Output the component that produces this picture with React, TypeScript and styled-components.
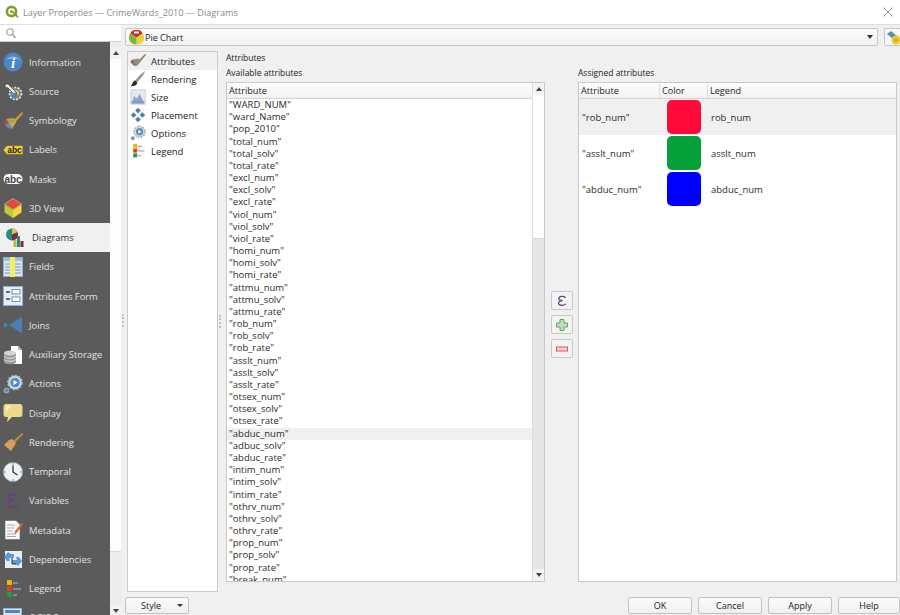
import React from "react";
import styled, { createGlobalStyle } from "styled-components";

const Global = createGlobalStyle`
  html, body { margin: 0; padding: 0; background: #f0f0f0; }
  * { box-sizing: border-box; }
  body { font-family: "Open Sans", "Noto Sans", sans-serif; font-size: 9.5px; color: #2b2b2b; }
`;

const Window = styled.div`
  width: 900px; height: 615px; overflow: hidden; display: flex; flex-direction: column; background: #f0f0f0;
`;
const TitleBar = styled.header`
  height: 25px; flex: none; background: #fff; display: flex; align-items: center; padding: 0 7px 0 5px; gap: 4px;
  border-bottom: 1px solid #dedede;
`;
const TitleText = styled.span`
  flex: 1; color: #8a8a8a; font-size: 9.1px;
`;
const Workspace = styled.div`
  flex: 1; min-height: 0; display: flex;
`;
const LeftColumn = styled.aside`
  width: 121px; flex: none; display: flex; flex-direction: column;
`;
const SearchBox = styled.div`
  height: 17px; flex: none; background: #fff; border-bottom: 1px solid #cfcfcf; display: flex; align-items: center; padding-left: 6px;
`;
const NavArea = styled.div`
  flex: 1; min-height: 0; display: flex;
`;
const NavList = styled.nav`
  width: 110px; flex: none; background: #5b5b5b; padding-top: 5.6px; overflow: hidden;
`;
const NavItem = styled.div<{ $active?: boolean }>`
  height: 29.25px; display: flex; align-items: center; gap: ${p => (p.$active ? "7px" : "6px")};
  padding-left: ${p => (p.$active ? "5px" : "3px")};
  background: ${p => (p.$active ? "#f0f0f0" : "transparent")};
  color: ${p => (p.$active ? "#2b2b2b" : "#e2e2e2")};
  white-space: nowrap; font-size: 9.4px;
  svg { flex: none; }
`;
const VScroll = styled.div<{ $w: number }>`
  width: ${p => p.$w}px; flex: none; display: flex; flex-direction: column; background: #e6e6e6; align-items: stretch;
  border-left: 1px solid #dcdcdc;
`;
const NavScroll = styled(VScroll)`
  margin-bottom: -2px; padding-top: 5px; background: #ececec; border-left: 0;
`;
const ScrollArrow = styled.div<{ $down?: boolean }>`
  height: 12px; flex: none; background: #f2f2f2; display: flex; align-items: center; justify-content: center;
  &::after {
    content: ""; border-left: 3.5px solid transparent; border-right: 3.5px solid transparent;
    ${p => (p.$down ? "border-top: 4px solid #444;" : "border-bottom: 4px solid #444;")}
  }
`;
const ScrollThumb = styled.div<{ $h: number }>`
  height: ${p => p.$h}px; flex: none; background: #fdfdfd; border-bottom: 1px solid #d8d8d8;
`;
const ScrollTrack = styled.div`
  flex: 1;
`;
const Grip = styled.div<{ $w: number; $pad: number }>`
  width: ${p => p.$w}px; flex: none; display: flex; align-items: center; padding-left: ${p => p.$pad}px;
  &::after { content: ""; width: 2px; height: 13px; border-left: 2px dotted #c0c0c0; }
`;
const Main = styled.main`
  flex: 1; min-width: 0; display: flex; flex-direction: column;
`;
const TopRow = styled.div`
  height: 18px; margin-top: 3px; flex: none; display: flex; gap: 6px; margin-right: -4px;
`;
const Combo = styled.div`
  flex: 1; border: 1px solid #c6c6c6; border-radius: 2px; background: linear-gradient(#fdfdfd, #f2f2f2);
  display: flex; align-items: center; gap: 1px; padding: 0 4px 0 3px;
`;
const ComboText = styled.span`
  flex: 1; color: #222; font-size: 9px;
`;
const Caret = styled.span`
  width: 0; height: 0; border-left: 3.5px solid transparent; border-right: 3.5px solid transparent; border-top: 4px solid #333;
`;
const IconButton = styled.div`
  width: 20px; flex: none; border: 1px solid #c6c6c6; border-radius: 2px; background: #f6f6f6;
  display: flex; align-items: center; padding-left: 1px;
`;
const Content = styled.div`
  flex: 1; min-height: 0; display: flex; margin-top: 5px; padding-left: 2px;
`;
const SubNav = styled.div`
  width: 91px; flex: none; background: #fff; border: 1px solid #cbcbcb; height: 541px;
`;
const SubItem = styled.div<{ $active?: boolean }>`
  height: 18px; display: flex; align-items: center; gap: 5px; padding-left: 2px; color: #222;
  background: ${p => (p.$active ? "#f0f0f0" : "transparent")};
`;
const Panel = styled.section`
  flex: 1; min-width: 0; display: flex; flex-direction: column; padding-top: 1px;
`;
const PanelTitle = styled.div`
  height: 14px; line-height: 11px; flex: none; color: #222; font-size: 8.5px;
`;
const Columns = styled.div`
  display: flex; height: 516px; padding-right: 3px;
`;
const Column = styled.div`
  width: 319px; flex: none; display: flex; flex-direction: column;
`;
const ColumnLabel = styled.div`
  height: 16px; line-height: 13px; flex: none; color: #222; font-size: 8.5px;
`;
const TableBox = styled.div`
  flex: 1; min-height: 0; border: 1px solid #c8c8c8; background: #fff; display: flex; overflow: hidden;
`;
const TableMain = styled.div`
  flex: 1; min-width: 0; display: flex; flex-direction: column;
`;
const HeaderRow = styled.div`
  height: 16px; flex: none; display: flex; background: linear-gradient(#fdfdfd, #f1f1f1); border-bottom: 1px solid #d4d4d4; color: #222; font-size: 9.1px;
`;
const HeaderCell = styled.div<{ $w?: number }>`
  ${p => (p.$w ? `width: ${p.$w}px; flex: none; border-right: 1px solid #dedede;` : "flex: 1;")}
  padding-left: 2px; line-height: 15px;
`;
const Rows = styled.div`
  flex: 1; min-height: 0; overflow: hidden;
`;
const AttrRow = styled.div<{ $active?: boolean }>`
  height: 12.18px; line-height: 12.18px; padding-left: 2px; white-space: nowrap; color: #2b2b2b;
  background: ${p => (p.$active ? "#f0f0f0" : "transparent")};
`;
const AssignedRow = styled.div<{ $active?: boolean }>`
  height: 36px; display: flex; align-items: center; color: #2b2b2b;
  background: ${p => (p.$active ? "#f0f0f0" : "transparent")};
`;
const AttrCell = styled.div`
  width: 81px; flex: none; padding-left: 3px;
`;
const SwatchCell = styled.div`
  width: 48px; flex: none; display: flex; justify-content: center;
`;
const Swatch = styled.div<{ $c: string }>`
  width: 34px; height: 34px; border-radius: 5px; background: ${p => p.$c};
`;
const LegendCell = styled.div`
  flex: 1; padding-left: 3px;
`;
const Middle = styled.div`
  width: 33px; flex: none; display: flex; flex-direction: column; gap: 5px; align-items: center; padding-top: 225px;
`;
const ToolButton = styled.div`
  width: 22px; height: 19px; border: 1px solid #c8c8c8; border-radius: 2px; background: #f3f3f3;
  display: flex; align-items: center; justify-content: center;
`;
const Footer = styled.footer`
  height: 23px; flex: none; display: flex; gap: 6px; padding-top: 5px;
`;
const PushButton = styled.div<{ $w: number }>`
  width: ${p => p.$w}px; height: 17px; border: 1px solid #c2c2c2; border-radius: 2px; background: linear-gradient(#fbfbfb, #efefef);
  display: flex; align-items: center; justify-content: center; color: #222; flex: none; position: relative; font-size: 9px;
`;
const StyleButton = styled(PushButton)`
  padding-right: 12px;
`;
const StyleCaret = styled(Caret)`
  position: absolute; right: 5px; top: 6px; border-left-width: 3px; border-right-width: 3px; border-top-width: 3px;
`;
const Spacer = styled.div`
  flex: 1;
`;

type IconProps = { s?: number };
const Svg: React.FC<React.PropsWithChildren<IconProps>> = ({ s = 20, children }) => (
  <svg width={s} height={s} viewBox="0 0 20 20" aria-hidden>{children}</svg>
);

const QgisLogo = () => (
  <svg width="14" height="14" viewBox="0 0 14 14" aria-hidden>
    <circle cx="6.5" cy="6.5" r="4.6" fill="none" stroke="#6fa52d" strokeWidth="2.6" />
    <path d="M6 6l6 6.5h1.2V11L8 6z" fill="#6fa52d" />
    <circle cx="6.5" cy="6.5" r="1.6" fill="#ee7913" />
  </svg>
);
const Info = () => (
  <Svg>
    <circle cx="10" cy="10" r="9.6" fill="#4a86c5" />
    <path d="M3 8a8 7 0 0 1 14 0c-4-2-10-2-14 0z" fill="#8fb9e3" />
    <text x="10" y="16" textAnchor="middle" fontFamily="Liberation Serif, serif" fontStyle="italic" fontWeight="700" fontSize="15" fill="#fff">i</text>
  </Svg>
);
const Source = () => (
  <Svg>
    <circle cx="12.500" cy="12.500" r="6" fill="#7f7f7f" stroke="#eee" strokeWidth="1.600" strokeDasharray="2 1.300" />
    <circle cx="12.500" cy="12.500" r="3.400" fill="#e8c94a" />
    <path d="M2 4c2-2 4-1 4.500.6L14 12l-2 2-7.300-7.200C3 7 1.500 6 2 4z" fill="#e9e9e9" stroke="#333" strokeWidth=".7" />
    <path d="M8 15l4-4 3 3-3 4z" fill="#4a7fb8" />
  </Svg>
);
const Symbology = () => (
  <Svg>
    <path d="M19 1l1 1.500-7 8-2-1.500z" fill="#d99a2b" />
    <path d="M3 8l8-1 2.500 3.500L9 18z" fill="#d4a24c" />
    <path d="M3 8l3 3.500L2 14 0.500 11z" fill="#d33f2d" />
    <path d="M6 11.500L9 18 5 17 2 14z" fill="#5b8fc9" />
    <path d="M5 9l6-1 1 2-5 2z" fill="#86b04a" />
  </Svg>
);
const LabelsIcon = () => (
  <Svg>
    <path d="M0.500 10L4 6h15.500v8H4z" fill="#f2d536" stroke="#c9a81a" strokeWidth=".6" />
    <text x="11.500" y="13" textAnchor="middle" fontFamily="Liberation Sans, sans-serif" fontWeight="700" fontSize="8.500" fill="#222">abc</text>
  </Svg>
);
const MasksIcon = () => (
  <Svg>
    <rect x="0.500" y="5" width="19" height="10" rx="5" fill="#fff" />
    <text x="10" y="13.500" textAnchor="middle" fontFamily="Liberation Sans, sans-serif" fontWeight="700" fontSize="10" fill="#444">abc</text>
  </Svg>
);
const View3D = () => (
  <Svg>
    <path d="M10 0.500L18.500 6 10 11.500 1.500 6z" fill="#e04a3f" stroke="#f6c0b8" strokeWidth=".6" />
    <path d="M1.500 6.500L10 12v8L1.500 14.500z" fill="#b8cf33" />
    <path d="M18.500 6.500L10 12v8l8.500-5.500z" fill="#f0d93a" />
  </Svg>
);
const DiagramsIcon = () => (
  <Svg>
    <circle cx="7" cy="6.500" r="6" fill="#2e8b78" />
    <path d="M7 6.500V.5a6 6 0 0 1 5.600 3.800z" fill="#d9c84a" />
    <path d="M7 6.500l5.600-2.200A6 6 0 0 1 7 12.500z" fill="#7a2a55" />
    <rect x="8.500" y="12" width="3" height="7" fill="#c3b53c" />
    <rect x="12" y="8" width="3" height="11" fill="#2e8b78" />
    <rect x="15.500" y="13" width="3" height="6" fill="#7a2a55" />
  </Svg>
);
const FieldsIcon = () => (
  <Svg>
    <rect x="0.500" y="0.500" width="19" height="19" fill="#dbe6f3" stroke="#8fb0d3" />
    <rect x="1" y="1" width="18" height="3" fill="#9cc0e6" />
    <path d="M2 7h16M2 10h16M2 13h16M2 16h16" stroke="#7b9cc2" />
    <rect x="7" y="0" width="5" height="20" fill="#f6ee62" />
  </Svg>
);
const FormIcon = () => (
  <Svg>
    <rect x="0.500" y="0.500" width="19" height="19" fill="#e6edf6" stroke="#8fb0d3" />
    <path d="M3 6h4M3 13h4" stroke="#444" strokeWidth="1.400" />
    <rect x="9" y="3.500" width="8" height="4.500" fill="#fff" stroke="#6f93bd" />
    <rect x="9" y="11" width="8" height="4.500" fill="#fff" stroke="#6f93bd" />
  </Svg>
);
const Joins = () => (
  <Svg>
    <circle cx="2.500" cy="10" r="2.200" fill="#4a7fb8" />
    <path d="M19 1.500v17L6 10z" fill="#4a7fb8" />
  </Svg>
);
const Storage = () => (
  <Svg>
    <path d="M8 1h7l4 4v14H8z" fill="#fff" />
    <path d="M15 1v4h4z" fill="#bbb" />
    <path d="M1 8v9c0 3 12 3 12 0V8z" fill="#9a9a9a" />
    <ellipse cx="7" cy="8" rx="6" ry="2.400" fill="#d4d4d4" />
    <path d="M1 11c0 3 12 3 12 0M1 14c0 3 12 3 12 0" fill="none" stroke="#eee" strokeWidth=".8" />
  </Svg>
);
const Actions = () => (
  <Svg>
    <circle cx="12" cy="8.500" r="6.800" fill="#dfe6ef" stroke="#bbb" strokeWidth="2" strokeDasharray="2.200 1.300" />
    <circle cx="12" cy="8.500" r="4.800" fill="#4f8fd0" />
    <path d="M10.500 6v5l4-2.500z" fill="#fff" />
    <circle cx="3.500" cy="16.500" r="2.500" fill="#5f8fc2" stroke="#ccd" strokeWidth=".6" />
  </Svg>
);
const Display = () => (
  <Svg>
    <path d="M3 1h14q2.500 0 2.500 3v7q0 3-2.500 3H9l-5 5 1-5H3Q.5 14 .5 11V4Q.5 1 3 1z" fill="#ecd98a" />
    <path d="M3 3h6L3 8z" fill="#f9f2cf" />
  </Svg>
);
const RenderingIcon = () => (
  <Svg>
    <path d="M19 1l1 1.500-8 8-2-1.500z" fill="#c98b34" />
    <path d="M6 8l3-1 4 4-1 2-4 6-7-6z" fill="#d6a05a" />
  </Svg>
);
const Temporal = () => (
  <Svg>
    <circle cx="10" cy="10" r="9.600" fill="#eef1f5" stroke="#aab6c6" strokeWidth=".6" />
    <path d="M10 3.500V10l4.500 3" fill="none" stroke="#333" strokeWidth="1.300" />
    <path d="M10 .8v2M10 17.200v2M.8 10h2M17.200 10h2" stroke="#777" />
  </Svg>
);
const Epsilon = ({ color = "#6c3f86", size = 18 }: { color?: string; size?: number }) => (
  <svg width={size} height={size} viewBox="0 0 20 20" aria-hidden>
    <path d="M14.500 5C12.500 2.500 5.500 3 5.500 6.500c0 2 2.500 3 5.500 3-3 0-6 1-6 3.700 0 3.500 7.500 3.800 10 1.300" fill="none" stroke={color} strokeWidth="1.900" strokeLinecap="round" />
  </svg>
);
const Metadata = () => (
  <Svg>
    <path d="M2 0.500h11l4 4v15H2z" fill="#fafafa" stroke="#666" strokeWidth=".6" />
    <path d="M4 5h8M4 8h7M4 11h6M4 14h9M4 16.500h9" stroke="#aaa" />
    <path d="M19 3l1 1.500-6 8-2.500 1.500.5-3z" fill="#e0672a" />
  </Svg>
);
const Dependencies = () => (
  <Svg>
    <rect x="2" y="2" width="17" height="17" fill="#e9eef5" />
    <path d="M1 8l4-5 3 2h3v4H6l1 3H4z" fill="#5f9ad8" />
    <path d="M19 12l-4 5-3-2H9v-4h5l-1-3h3z" fill="#5f9ad8" />
    <path d="M9 9v6h4" fill="none" stroke="#333" />
  </Svg>
);
const LegendIcon = ({ s = 20 }: IconProps) => (
  <Svg s={s}>
    <rect x="4" y="1" width="5" height="5" fill="#f0b400" />
    <rect x="4" y="7" width="5" height="5" fill="#e2401f" />
    <rect x="4" y="13" width="5" height="5" fill="#1f9c4a" />
    <path d="M10 4h5M10 10h8M10 16h4" stroke="#9a9a9a" strokeWidth="1.400" />
  </Svg>
);
const ServerIcon = () => (
  <Svg>
    <rect x="0.500" y="0.500" width="18" height="14" fill="#dfe8f3" stroke="#8fb0d3" />
    <rect x="2" y="2" width="15" height="3" fill="#4a86c5" />
  </Svg>
);
const PieIcon = () => (
  <svg width="15" height="15" viewBox="0 0 15 15" aria-hidden>
    <path d="M7.500 7.500L1.200 3.500A7 7 0 0 1 13.800 3.500z" fill="#d32a2a" />
    <path d="M7.500 7.500l6.300-4A7 7 0 0 1 7.500 14.500z" fill="#e8d23c" />
    <path d="M7.500 7.500v7A7 7 0 0 1 1.200 3.500z" fill="#7cb83a" />
    <path d="M5 1.500h5v2H5z" fill="#f4f4f4" />
  </svg>
);
const StyleTool = () => (
  <svg width="16" height="15" viewBox="0 0 16 15" aria-hidden>
    <path d="M1 4l4-3 6 5-4 3z" fill="#5a8fc0" />
    <circle cx="10" cy="10" r="4.500" fill="#efc92e" />
    <circle cx="10" cy="10" r="1.500" fill="#c79e1a" />
  </svg>
);
const SubAttributes = () => (
  <Svg s={16}>
    <path d="M19 1l1 1.500-7 8-2-1.500z" fill="#8a8a5a" />
    <path d="M3 8l8-1 2.500 3.500L9 16z" fill="#8f8f86" />
    <path d="M3 8l3 3.500L2 13 .5 11z" fill="#a94a4a" />
    <path d="M6 11.500L9 16 5 16 2 13z" fill="#5b7fa9" />
  </Svg>
);
const SubRendering = () => (
  <Svg s={16}>
    <path d="M19 0C14 3 8 9 7 12l2 2C12 11 17 6 19 0z" fill="#9a9a9a" />
    <path d="M7 12c-3 0-3 3-6 7 4 0 8-1 8-5z" fill="#2c2c2c" />
  </Svg>
);
const SubSize = () => (
  <Svg s={16}>
    <rect x="1" y="1" width="18" height="18" fill="#e4e9f1" stroke="#c6ced9" />
    <path d="M2 18L5 9l4 3 3-6 6 12z" fill="#8ea6cf" />
    <path d="M2 18h16v-3H2z" fill="#7f9bcc" />
  </Svg>
);
const SubPlacement = () => (
  <Svg s={16}>
    <g fill="#4f7fa8">
      <path d="M10 1l3.500 3.500L10 8 6.500 4.500z" />
      <path d="M10 12l3.500 3.500L10 19l-3.500-3.500z" />
      <path d="M4.500 6.500L8 10l-3.500 3.500L1 10z" />
      <path d="M15.500 6.500L19 10l-3.500 3.500L12 10z" />
    </g>
  </Svg>
);
const SubOptions = () => (
  <Svg s={16}>
    <circle cx="12" cy="8.500" r="6.800" fill="#e4e8ec" stroke="#a9a9a9" strokeWidth="2" strokeDasharray="2.200 1.300" />
    <circle cx="12" cy="8.500" r="4.600" fill="#5b8fc4" />
    <path d="M10.500 6v5l4-2.500z" fill="#fff" />
    <circle cx="3.500" cy="16.500" r="2.500" fill="#7f99b8" />
  </Svg>
);

const navItems: { label: string; icon: React.ReactNode; active?: boolean }[] = [
  { label: "Information", icon: <Info /> },
  { label: "Source", icon: <Source /> },
  { label: "Symbology", icon: <Symbology /> },
  { label: "Labels", icon: <LabelsIcon /> },
  { label: "Masks", icon: <MasksIcon /> },
  { label: "3D View", icon: <View3D /> },
  { label: "Diagrams", icon: <DiagramsIcon />, active: true },
  { label: "Fields", icon: <FieldsIcon /> },
  { label: "Attributes Form", icon: <FormIcon /> },
  { label: "Joins", icon: <Joins /> },
  { label: "Auxiliary Storage", icon: <Storage /> },
  { label: "Actions", icon: <Actions /> },
  { label: "Display", icon: <Display /> },
  { label: "Rendering", icon: <RenderingIcon /> },
  { label: "Temporal", icon: <Temporal /> },
  { label: "Variables", icon: <Epsilon size={20} /> },
  { label: "Metadata", icon: <Metadata /> },
  { label: "Dependencies", icon: <Dependencies /> },
  { label: "Legend", icon: <LegendIcon /> },
  { label: "QGIS Server", icon: <ServerIcon /> },
];

const subItems: { label: string; icon: React.ReactNode; active?: boolean }[] = [
  { label: "Attributes", icon: <SubAttributes />, active: true },
  { label: "Rendering", icon: <SubRendering /> },
  { label: "Size", icon: <SubSize /> },
  { label: "Placement", icon: <SubPlacement /> },
  { label: "Options", icon: <SubOptions /> },
  { label: "Legend", icon: <LegendIcon s={16} /> },
];

const attributes = [
  "WARD_NUM", "ward_Name", "pop_2010", "total_num", "total_solv", "total_rate", "excl_num", "excl_solv", "excl_rate",
  "viol_num", "viol_solv", "viol_rate", "homi_num", "homi_solv", "homi_rate", "attmu_num", "attmu_solv", "attmu_rate",
  "rob_num", "rob_solv", "rob_rate", "asslt_num", "asslt_solv", "asslt_rate", "otsex_num", "otsex_solv", "otsex_rate",
  "abduc_num", "adbuc_solv", "abduc_rate", "intim_num", "intim_solv", "intim_rate", "othrv_num", "othrv_solv", "othrv_rate",
  "prop_num", "prop_solv", "prop_rate", "break_num",
];

const assigned = [
  { name: "rob_num", color: "#ff0a3a" },
  { name: "asslt_num", color: "#06a03a" },
  { name: "abduc_num", color: "#0000ff" },
];

export default function App() {
  return (
    <Window>
      <Global />
      <TitleBar>
        <QgisLogo />
        <TitleText>Layer Properties — CrimeWards_2010 — Diagrams</TitleText>
        <svg width="10" height="10" viewBox="0 0 10 10" aria-hidden>
          <path d="M0.500 0.500l9 9M9.500 0.500l-9 9" stroke="#8c8c8c" strokeWidth=".9" />
        </svg>
      </TitleBar>
      <Workspace>
        <LeftColumn>
          <SearchBox>
            <svg width="10" height="11" viewBox="0 0 10 11" aria-hidden>
              <circle cx="4" cy="4" r="3.200" fill="none" stroke="#9a9a9a" strokeWidth="1.100" />
              <path d="M6.500 6.500L9.500 10" stroke="#9a9a9a" strokeWidth="1.300" />
            </svg>
          </SearchBox>
          <NavArea>
            <NavList>
              {navItems.map(n => (
                <NavItem key={n.label} $active={n.active}>
                  {n.icon}
                  <span>{n.label}</span>
                </NavItem>
              ))}
            </NavList>
            <NavScroll $w={11}>
              <ScrollArrow />
              <ScrollThumb $h={493} />
              <ScrollTrack />
              <ScrollArrow $down />
            </NavScroll>
          </NavArea>
        </LeftColumn>
        <Grip $w={4} $pad={1} />
        <Main>
          <TopRow>
            <Combo>
              <PieIcon />
              <ComboText>Pie Chart</ComboText>
              <Caret />
            </Combo>
            <IconButton><StyleTool /></IconButton>
          </TopRow>
          <Content>
            <SubNav>
              {subItems.map(s => (
                <SubItem key={s.label} $active={s.active}>
                  {s.icon}
                  <span>{s.label}</span>
                </SubItem>
              ))}
            </SubNav>
            <Grip $w={8} $pad={1} />
            <Panel>
              <PanelTitle>Attributes</PanelTitle>
              <Columns>
                <Column>
                  <ColumnLabel>Available attributes</ColumnLabel>
                  <TableBox>
                    <TableMain>
                      <HeaderRow><HeaderCell>Attribute</HeaderCell></HeaderRow>
                      <Rows>
                        {attributes.map(a => (
                          <AttrRow key={a} $active={a === "abduc_num"}>"{a}"</AttrRow>
                        ))}
                      </Rows>
                    </TableMain>
                    <VScroll $w={12}>
                      <ScrollArrow />
                      <ScrollThumb $h={144} />
                      <ScrollTrack />
                      <ScrollArrow $down />
                    </VScroll>
                  </TableBox>
                </Column>
                <Middle>
                  <ToolButton><Epsilon size={14} /></ToolButton>
                  <ToolButton>
                    <svg width="14" height="14" viewBox="0 0 14 14" aria-hidden>
                      <path d="M5 1.500h4v3.500h3.500v4H9v3.500H5V9H1.500V5H5z" fill="#bfe0bf" stroke="#5fa06f" />
                    </svg>
                  </ToolButton>
                  <ToolButton>
                    <svg width="14" height="14" viewBox="0 0 14 14" aria-hidden>
                      <rect x="1.500" y="5" width="11" height="4" fill="#fbd0d0" stroke="#e2575f" />
                    </svg>
                  </ToolButton>
                </Middle>
                <Column>
                  <ColumnLabel>Assigned attributes</ColumnLabel>
                  <TableBox>
                    <TableMain>
                      <HeaderRow>
                        <HeaderCell $w={81}>Attribute</HeaderCell>
                        <HeaderCell $w={48}>Color</HeaderCell>
                        <HeaderCell>Legend</HeaderCell>
                      </HeaderRow>
                      <Rows>
                        {assigned.map((r, i) => (
                          <AssignedRow key={r.name} $active={i === 0}>
                            <AttrCell>"{r.name}"</AttrCell>
                            <SwatchCell><Swatch $c={r.color} /></SwatchCell>
                            <LegendCell>{r.name}</LegendCell>
                          </AssignedRow>
                        ))}
                      </Rows>
                    </TableMain>
                  </TableBox>
                </Column>
              </Columns>
            </Panel>
          </Content>
          <Footer>
            <StyleButton $w={64}>Style<StyleCaret /></StyleButton>
            <Spacer />
            <PushButton $w={64}>OK</PushButton>
            <PushButton $w={64}>Cancel</PushButton>
            <PushButton $w={64}>Apply</PushButton>
            <PushButton $w={62}>Help</PushButton>
          </Footer>
        </Main>
      </Workspace>
    </Window>
  );
}
